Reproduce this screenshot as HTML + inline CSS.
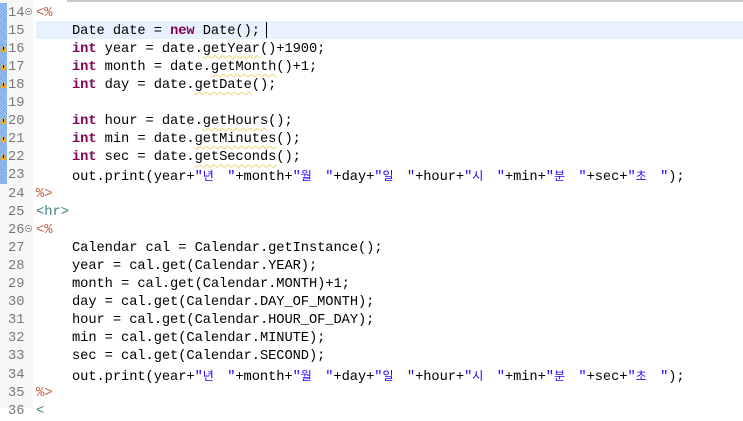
<!DOCTYPE html>
<html><head><meta charset="utf-8"><style>
body{margin:0;width:743px;height:408px;overflow:hidden;background:#fff;position:relative;font-family:"Liberation Mono","Noto Sans CJK KR",monospace;font-size:13.75px}
.g{position:absolute;left:0;top:0;width:33px;height:408px;background:#f7f7f7}
.stripe{position:absolute;left:0;top:3px;width:7px;height:181px;background:repeating-linear-gradient(45deg,#6fa3e6 0 1px,#a9c9f2 1px 2px)}
.top{position:absolute;left:67px;top:0;right:0;height:2px;background:#c8c8c8}
.hl{position:absolute;left:36px;right:0;top:21px;height:18px;background:#e8f2fe}
.c{position:absolute;left:0;top:1.5px;width:743px;height:408px}
.l{position:absolute;left:36px;height:18px;line-height:18px;white-space:pre;color:#000}
.i{left:72px;letter-spacing:-0.08px}
.n{position:absolute;left:8px;height:18px;line-height:18px;color:#787878;font-size:13.75px}
.k{color:#7f0055;font-weight:bold}
.s{color:#2a00ff}
.h{display:inline-block;width:16.3px;font-family:"Noto Sans CJK KR",sans-serif;font-size:12px;text-align:left}
.d{color:#bf5f3f}
.t{color:#3f7f7f}
.w{text-decoration:underline wavy #f3d27a;text-decoration-thickness:1px;text-underline-offset:3px}
.warn{position:absolute;left:0;width:7px;height:7px}
.fold{position:absolute;left:25px;width:7px;height:7px;border:1px solid #999;border-radius:50%;box-sizing:border-box;background:#fff}
.fold:after{content:"";position:absolute;left:1px;top:2px;width:3px;height:1px;background:#777}
.cur{position:absolute;left:266px;top:22px;width:1px;height:16px;background:#000}
</style></head><body>
<div class="g"></div>
<div class="stripe"></div>
<div class="top"></div>
<div class="hl"></div>
<div class="cur"></div>

<div class="fold" style="top:8px"></div>
<div class="fold" style="top:225px"></div>

<svg class="warn" style="top:45px" viewBox="0 0 7 7"><path d="M3.5 0L7 7H0Z" fill="#e8b020"/><rect x="3" y="2" width="1" height="3" fill="#000"/></svg>
<svg class="warn" style="top:63px" viewBox="0 0 7 7"><path d="M3.5 0L7 7H0Z" fill="#e8b020"/><rect x="3" y="2" width="1" height="3" fill="#000"/></svg>
<svg class="warn" style="top:81px" viewBox="0 0 7 7"><path d="M3.5 0L7 7H0Z" fill="#e8b020"/><rect x="3" y="2" width="1" height="3" fill="#000"/></svg>
<svg class="warn" style="top:117px" viewBox="0 0 7 7"><path d="M3.5 0L7 7H0Z" fill="#e8b020"/><rect x="3" y="2" width="1" height="3" fill="#000"/></svg>
<svg class="warn" style="top:135px" viewBox="0 0 7 7"><path d="M3.5 0L7 7H0Z" fill="#e8b020"/><rect x="3" y="2" width="1" height="3" fill="#000"/></svg>
<svg class="warn" style="top:153px" viewBox="0 0 7 7"><path d="M3.5 0L7 7H0Z" fill="#e8b020"/><rect x="3" y="2" width="1" height="3" fill="#000"/></svg>

<div class="c">
<div class="n" style="top:3px">14</div>
<div class="n" style="top:21.1px">15</div>
<div class="n" style="top:39.2px">16</div>
<div class="n" style="top:57.3px">17</div>
<div class="n" style="top:75.4px">18</div>
<div class="n" style="top:93.5px">19</div>
<div class="n" style="top:111.6px">20</div>
<div class="n" style="top:129.7px">21</div>
<div class="n" style="top:147.8px">22</div>
<div class="n" style="top:165.9px">23</div>
<div class="n" style="top:184px">24</div>
<div class="n" style="top:202.1px">25</div>
<div class="n" style="top:220.2px">26</div>
<div class="n" style="top:238.3px">27</div>
<div class="n" style="top:256.4px">28</div>
<div class="n" style="top:274.5px">29</div>
<div class="n" style="top:292.6px">30</div>
<div class="n" style="top:310.7px">31</div>
<div class="n" style="top:328.8px">32</div>
<div class="n" style="top:346.9px">33</div>
<div class="n" style="top:365px">34</div>
<div class="n" style="top:383.1px">35</div>
<div class="n" style="top:401.2px">36</div>

<div class="l" style="top:3px"><span class="d">&lt;%</span></div>
<div class="l i" style="top:21.1px">Date date = <span class="k">new</span> Date();</div>
<div class="l i" style="top:39.2px"><span class="k">int</span> year = date.<span class="w">getYear</span>()+1900;</div>
<div class="l i" style="top:57.3px"><span class="k">int</span> month = date.<span class="w">getMonth</span>()+1;</div>
<div class="l i" style="top:75.4px"><span class="k">int</span> day = date.<span class="w">getDate</span>();</div>
<div class="l i" style="top:111.6px"><span class="k">int</span> hour = date.<span class="w">getHours</span>();</div>
<div class="l i" style="top:129.7px"><span class="k">int</span> min = date.<span class="w">getMinutes</span>();</div>
<div class="l i" style="top:147.8px"><span class="k">int</span> sec = date.<span class="w">getSeconds</span>();</div>
<div class="l i" style="top:165.9px">out.print(year+<span class="s">"<span class="h">년</span> "</span>+month+<span class="s">"<span class="h">월</span> "</span>+day+<span class="s">"<span class="h">일</span> "</span>+hour+<span class="s">"<span class="h">시</span> "</span>+min+<span class="s">"<span class="h">분</span> "</span>+sec+<span class="s">"<span class="h">초</span> "</span>);</div>
<div class="l" style="top:184px"><span class="d">%&gt;</span></div>
<div class="l" style="top:202.1px"><span class="t">&lt;hr&gt;</span></div>
<div class="l" style="top:220.2px"><span class="d">&lt;%</span></div>
<div class="l i" style="top:238.3px">Calendar cal = Calendar.getInstance();</div>
<div class="l i" style="top:256.4px">year = cal.get(Calendar.YEAR);</div>
<div class="l i" style="top:274.5px">month = cal.get(Calendar.MONTH)+1;</div>
<div class="l i" style="top:292.6px">day = cal.get(Calendar.DAY_OF_MONTH);</div>
<div class="l i" style="top:310.7px">hour = cal.get(Calendar.HOUR_OF_DAY);</div>
<div class="l i" style="top:328.8px">min = cal.get(Calendar.MINUTE);</div>
<div class="l i" style="top:346.9px">sec = cal.get(Calendar.SECOND);</div>
<div class="l i" style="top:365px">out.print(year+<span class="s">"<span class="h">년</span> "</span>+month+<span class="s">"<span class="h">월</span> "</span>+day+<span class="s">"<span class="h">일</span> "</span>+hour+<span class="s">"<span class="h">시</span> "</span>+min+<span class="s">"<span class="h">분</span> "</span>+sec+<span class="s">"<span class="h">초</span> "</span>);</div>
<div class="l" style="top:383.1px"><span class="d">%&gt;</span></div>
<div class="l" style="top:401.2px"><span class="t">&lt;</span></div>
</div>
</body></html>
